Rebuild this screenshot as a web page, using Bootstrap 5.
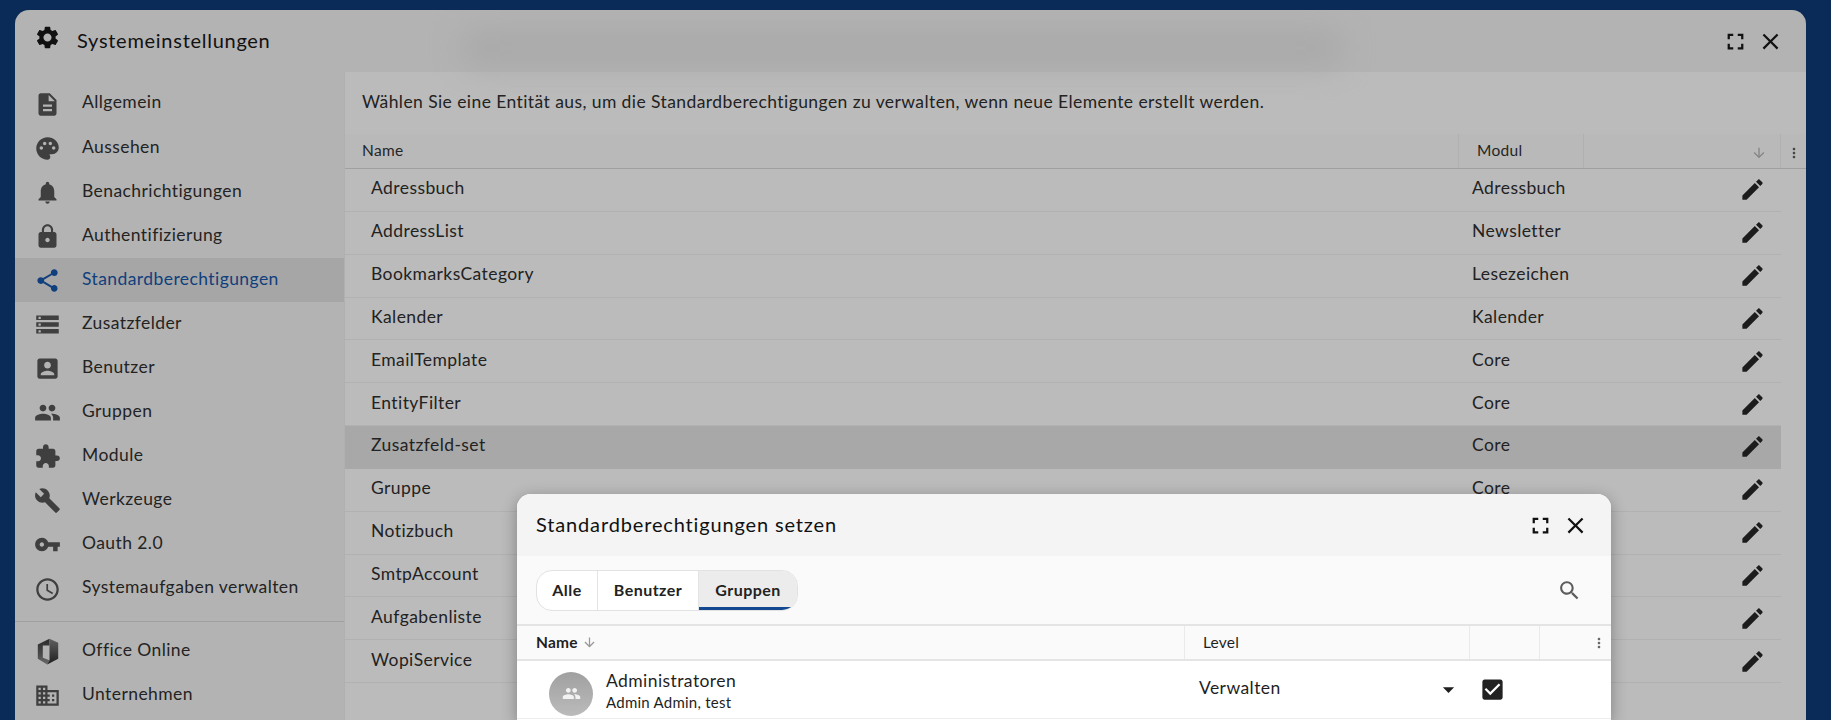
<!DOCTYPE html>
<html lang="de">
<head>
<meta charset="utf-8">
<title>Systemeinstellungen</title>
<link href="https://cdn.jsdelivr.net/npm/bootstrap@5.3.0/dist/css/bootstrap.min.css" rel="stylesheet">
<style>
html,body{height:720px;overflow:hidden}
body{background:#0a2a57;font-family:Lato,"Liberation Sans",sans-serif;color:#222;font-size:17.5px;letter-spacing:.42px}
.ico{display:block;flex:none;fill:currentColor}
.winframe{margin:10px 25px 0 15px;height:710px;background:#b3b3b3;border-radius:14px 14px 0 0;position:relative;overflow:hidden}
.wintitle{height:62px;flex:none;padding:0 22px 0 18.5px;color:#111}
.wintitle h1{font-size:20px;font-weight:400;letter-spacing:.72px;margin:0 0 0 16.5px;position:relative;top:-1px}
.smear{position:absolute;left:445px;top:18px;width:885px;height:40px;background:#aaa;filter:blur(14px);border-radius:20px}
.topbtns{margin-left:auto;gap:8px}
.sidecol{width:329px;flex:none;padding-top:10px}
.sideitem{height:44.1px;padding:0 0 3px 18.5px;color:#232323;text-decoration:none}
.sideitem .ico{color:#3f3f3f;margin:0 21.5px -3px 0}
.sideitem.sel{background:#a6a6a6;color:#103f7d}
.sideitem.sel .ico{color:#103f7d}
.sidesep{border-top:1px solid #a0a0a0;margin:10px 0 7px}
.maincol{flex:1;background:#bbb;border-left:1px solid #b0b0b0;min-width:0}
.intro{padding:17px 0 0 17px;height:62px;margin:0}
.thead-main{height:35px;border-bottom:1px solid #a0a0a0;font-size:15.5px;letter-spacing:.3px;color:#252525;background:#b9b9b9}
.thead-main>div{height:100%}
.hc1{width:1113px;padding:0 0 0 17px}
.hc2{width:125px;padding:0 0 0 18px;border-left:1px solid #b0b0b0}
.hc3{width:197px;border-left:1px solid #b0b0b0;padding:3px 0 0 0;color:#868686;justify-content:flex-end}
.hc4{width:26px;border-left:1px solid #b0b0b0;color:#444;justify-content:center;padding-top:3px}
.erow{width:1436px;height:42.85px;border-bottom:1px solid #b1b1b1}
.erow.hov{background:#a8a8a8;border-bottom-color:#a8a8a8}
.ename{width:1127px;padding:0 0 3px 26px}
.emod{width:267px;padding-bottom:3px}
.pen{color:#1c1c1c}
.dlg{position:absolute;left:517px;top:494px;width:1094px;height:226px;background:#fff;border-radius:14px 14px 0 0;box-shadow:0 4px 16px rgba(0,0,0,.32);overflow:hidden;color:#1f1f1f}
.dlghead{height:62px;background:#f4f4f4;padding:0 22.5px 0 19px;color:#111}
.dlghead h2{font-size:20px;font-weight:400;letter-spacing:.85px;margin:0;position:relative;top:-1px}
.dlgtools{height:70px;background:#fafafa;padding:0 29.5px 0 19px;border-bottom:2px solid #e4e4e4}
.segs{height:41px;border:1px solid #e2e2e2;border-radius:16px;background:#fff;overflow:hidden}
.segs>a{height:100%;font-weight:700;font-size:16px;letter-spacing:.45px;color:#222;text-decoration:none;border-right:1px solid #e4e4e4;justify-content:center}
.sega{width:61px}
.segb{width:101px}
.segc{width:98px}
.segs>a.on{background:#ececec;border-right:0;border-bottom:3px solid #12488f;padding-top:3px}
.searchbtn{margin-left:auto;color:#5c5c5c}
.dhead{height:35px;background:#fafafa;border-bottom:2px solid #e4e4e4;font-size:15.5px;letter-spacing:.2px}
.dhead>div{height:100%}
.dh1{width:667px;padding-left:19px;font-weight:700}
.dh1 .ico{color:#999;margin-left:4px}
.dh2{width:285px;padding-left:18px;border-left:1px solid #eaeaea}
.dh3{width:70px;border-left:1px solid #eaeaea}
.dh4{flex:1;border-left:1px solid #eaeaea;color:#666;justify-content:flex-end;padding-right:4px}
.drow{height:58px;border-bottom:1px solid #ededed}
.dav{width:44px;height:44px;flex:none;border-radius:50%;background:linear-gradient(#a0a0a0,#bbb);color:#f2f2f2;margin:0 13px 0 32px;position:relative;top:4px}
.dnm{width:593px;line-height:1.2;position:relative;top:1px}
.dnm b{display:block;font-weight:400}
.dnm span{display:block;font-size:15px;letter-spacing:.25px;margin-top:2px}
.dlev{width:262.5px}
.lvltxt{margin-bottom:3px}
.dchk{color:#222;margin-left:17px}
</style>
</head>
<body>
<svg width="0" height="0" class="d-block position-absolute">
<defs>
<linearGradient id="ofl" x1="0" y1="0" x2="0" y2="1"><stop offset="0" stop-color="#2a2a2a"/><stop offset=".6" stop-color="#4a4a4a"/><stop offset="1" stop-color="#6a6a6a"/></linearGradient>
<linearGradient id="ofr" x1="0" y1="0" x2="0" y2="1"><stop offset="0" stop-color="#606060"/><stop offset=".7" stop-color="#333"/><stop offset="1" stop-color="#1f1f1f"/></linearGradient>
<symbol id="settings" viewBox="0 0 24 24"><path d="M19.14 12.94c.04-.3.06-.61.06-.94 0-.32-.02-.64-.07-.94l2.03-1.58c.18-.14.23-.41.12-.61l-1.92-3.32c-.12-.22-.37-.29-.59-.22l-2.39.96c-.5-.38-1.03-.7-1.62-.94l-.36-2.54c-.04-.24-.24-.41-.48-.41h-3.84c-.24 0-.43.17-.47.41l-.36 2.54c-.59.24-1.13.57-1.62.94l-2.39-.96c-.22-.08-.47 0-.59.22L2.74 8.87c-.12.21-.08.47.12.61l2.03 1.58c-.05.3-.09.63-.09.94s.02.64.07.94l-2.03 1.58c-.18.14-.23.41-.12.61l1.92 3.32c.12.22.37.29.59.22l2.39-.96c.5.38 1.03.7 1.62.94l.36 2.54c.05.24.24.41.48.41h3.84c.24 0 .44-.17.47-.41l.36-2.54c.59-.24 1.13-.56 1.62-.94l2.39.96c.22.08.47 0 .59-.22l1.92-3.32c.12-.22.07-.47-.12-.61l-2.01-1.58zM12 15.6c-1.98 0-3.6-1.62-3.6-3.6s1.62-3.6 3.6-3.6 3.6 1.62 3.6 3.6-1.62 3.6-3.6 3.6z"/></symbol>
<symbol id="desc" viewBox="0 0 24 24"><path d="M14 2H6c-1.1 0-1.99.9-1.99 2L4 20c0 1.1.89 2 1.99 2H18c1.1 0 2-.9 2-2V8l-6-6zm2 16H8v-2h8v2zm0-4H8v-2h8v2zm-3-5V3.5L18.5 9H13z"/></symbol>
<symbol id="palette" viewBox="0 0 24 24"><path d="M12 2C6.49 2 2 6.49 2 12s4.49 10 10 10c1.38 0 2.5-1.12 2.5-2.5 0-.61-.23-1.2-.64-1.67-.08-.1-.13-.21-.13-.33 0-.28.22-.5.5-.5H16c3.31 0 6-2.69 6-6 0-4.96-4.49-9-10-9zm5.5 11c-.83 0-1.5-.67-1.5-1.5s.67-1.5 1.5-1.5 1.5.67 1.5 1.5-.67 1.5-1.5 1.5zm-3-4c-.83 0-1.5-.67-1.5-1.5S13.67 6 14.5 6s1.5.67 1.5 1.5S15.33 9 14.5 9zM5 11.5c0-.83.67-1.5 1.5-1.5s1.5.67 1.5 1.5S7.33 13 6.5 13 5 12.33 5 11.5zm6-4c0 .83-.67 1.5-1.5 1.5S8 8.33 8 7.5 8.67 6 9.5 6s1.5.67 1.5 1.5z"/></symbol>
<symbol id="bell" viewBox="0 0 24 24"><path d="M12 22c1.1 0 2-.9 2-2h-4c0 1.1.9 2 2 2zm6-6v-5c0-3.07-1.63-5.64-4.5-6.32V4c0-.83-.67-1.5-1.5-1.5s-1.5.67-1.5 1.5v.68C7.64 5.36 6 7.92 6 11v5l-2 2v1h16v-1l-2-2z"/></symbol>
<symbol id="lock" viewBox="0 0 24 24"><path d="M18 8h-1V6c0-2.76-2.24-5-5-5S7 3.24 7 6v2H6c-1.1 0-2 .9-2 2v10c0 1.1.9 2 2 2h12c1.1 0 2-.9 2-2V10c0-1.1-.9-2-2-2zm-6 9c-1.1 0-2-.9-2-2s.9-2 2-2 2 .9 2 2-.9 2-2 2zm3.1-9H8.9V6c0-1.71 1.39-3.1 3.1-3.1 1.71 0 3.1 1.39 3.1 3.1v2z"/></symbol>
<symbol id="share" viewBox="0 0 24 24"><path d="M18 16.08c-.76 0-1.44.3-1.96.77L8.91 12.7c.05-.23.09-.46.09-.7s-.04-.47-.09-.7l7.05-4.11c.54.5 1.25.81 2.04.81 1.66 0 3-1.34 3-3s-1.34-3-3-3-3 1.34-3 3c0 .24.04.47.09.7L8.04 9.81C7.5 9.31 6.79 9 6 9c-1.66 0-3 1.34-3 3s1.34 3 3 3c.79 0 1.5-.31 2.04-.81l7.12 4.16c-.05.21-.08.43-.08.65 0 1.61 1.31 2.92 2.92 2.92s2.92-1.31 2.92-2.92-1.31-2.92-2.92-2.92z"/></symbol>
<symbol id="storage" viewBox="0 0 24 24"><path d="M2 20h20v-4H2v4zm2-3h2v2H4v-2zM2 4v4h20V4H2zm4 3H4V5h2v2zm-4 7h20v-4H2v4zm2-3h2v2H4v-2z"/></symbol>
<symbol id="accbox" viewBox="0 0 24 24"><path d="M3 5v14c0 1.1.89 2 2 2h14c1.1 0 2-.9 2-2V5c0-1.1-.9-2-2-2H5c-1.11 0-2 .9-2 2zm12 4c0 1.66-1.34 3-3 3s-3-1.34-3-3 1.34-3 3-3 3 1.34 3 3zm-9 8c0-2 4-3.1 6-3.1s6 1.1 6 3.1v1H6v-1z"/></symbol>
<symbol id="group" viewBox="0 0 24 24"><path d="M16 11c1.66 0 2.99-1.34 2.99-3S17.66 5 16 5c-1.66 0-3 1.34-3 3s1.34 3 3 3zm-8 0c1.66 0 2.99-1.34 2.99-3S9.66 5 8 5C6.34 5 5 6.34 5 8s1.34 3 3 3zm0 2c-2.33 0-7 1.17-7 3.5V19h14v-2.5c0-2.33-4.67-3.5-7-3.5zm8 0c-.29 0-.62.02-.97.05 1.16.84 1.97 1.97 1.97 3.45V19h6v-2.5c0-2.33-4.67-3.5-7-3.5z"/></symbol>
<symbol id="ext" viewBox="0 0 24 24"><path d="M20.5 11H19V7c0-1.1-.9-2-2-2h-4V3.5C13 2.12 11.88 1 10.5 1S8 2.12 8 3.5V5H4c-1.1 0-1.99.9-1.99 2v3.8H3.5c1.49 0 2.7 1.21 2.7 2.7s-1.21 2.7-2.7 2.7H2V20c0 1.1.9 2 2 2h3.8v-1.5c0-1.49 1.21-2.7 2.7-2.7 1.49 0 2.7 1.21 2.7 2.7V22H17c1.1 0 2-.9 2-2v-4h1.5c1.38 0 2.5-1.12 2.5-2.5S21.88 11 20.5 11z"/></symbol>
<symbol id="build" viewBox="0 0 24 24"><path d="M22.7 19l-9.1-9.1c.9-2.3.4-5-1.5-6.9-2-2-5-2.4-7.4-1.3L9 6 6 9 1.6 4.7C.4 7.1.9 10.1 2.9 12.1c1.9 1.9 4.6 2.4 6.9 1.5l9.1 9.1c.4.4 1 .4 1.4 0l2.3-2.3c.5-.4.5-1.1.1-1.4z"/></symbol>
<symbol id="key" viewBox="0 0 24 24"><path d="M12.65 10C11.83 7.67 9.61 6 7 6c-3.31 0-6 2.69-6 6s2.69 6 6 6c2.61 0 4.83-1.67 5.65-4H17v4h4v-4h2v-4H12.65zM7 14c-1.1 0-2-.9-2-2s.9-2 2-2 2 .9 2 2-.9 2-2 2z"/></symbol>
<symbol id="clock" viewBox="0 0 24 24"><path d="M11.99 2C6.47 2 2 6.48 2 12s4.47 10 9.99 10C17.52 22 22 17.52 22 12S17.52 2 11.99 2zM12 20c-4.42 0-8-3.58-8-8s3.58-8 8-8 8 3.58 8 8-3.58 8-8 8zm.5-13H11v6l5.25 3.15.75-1.23-4.5-2.67z"/></symbol>
<symbol id="biz" viewBox="0 0 24 24"><path d="M12 7V3H2v18h20V7H12zM6 19H4v-2h2v2zm0-4H4v-2h2v2zm0-4H4V9h2v2zm0-4H4V5h2v2zm4 12H8v-2h2v2zm0-4H8v-2h2v2zm0-4H8V9h2v2zm0-4H8V5h2v2zm10 12h-8v-2h2v-2h-2v-2h2v-2h-2V9h8v10zm-2-8h-2v2h2v-2zm0 4h-2v2h2v-2z"/></symbol>
<symbol id="edit" viewBox="0 0 24 24"><path d="M3 17.25V21h3.75L17.81 9.94l-3.75-3.75L3 17.25zM20.71 7.04c.39-.39.39-1.02 0-1.41l-2.34-2.34c-.39-.39-1.02-.39-1.41 0l-1.83 1.83 3.75 3.75 1.83-1.83z"/></symbol>
<symbol id="full" viewBox="0 0 24 24"><path d="M7 14H5v5h5v-2H7v-3zm-2-4h2V7h3V5H5v5zm12 7h-3v2h5v-5h-2v3zM14 5v2h3v3h2V5h-5z"/></symbol>
<symbol id="close" viewBox="0 0 24 24"><path d="M19 6.41L17.59 5 12 10.59 6.41 5 5 6.41 10.59 12 5 17.59 6.41 19 12 13.41 17.59 19 19 17.59 13.41 12z"/></symbol>
<symbol id="down" viewBox="0 0 24 24"><path d="M20 12l-1.41-1.41L13 16.17V4h-2v12.17l-5.58-5.59L4 12l8 8 8-8z"/></symbol>
<symbol id="more" viewBox="0 0 24 24"><path d="M12 8c1.1 0 2-.9 2-2s-.9-2-2-2-2 .9-2 2 .9 2 2 2zm0 2c-1.1 0-2 .9-2 2s.9 2 2 2 2-.9 2-2-.9-2-2-2zm0 6c-1.1 0-2 .9-2 2s.9 2 2 2 2-.9 2-2-.9-2-2-2z"/></symbol>
<symbol id="search" viewBox="0 0 24 24"><path d="M15.5 14h-.79l-.28-.27C15.41 12.59 16 11.11 16 9.5 16 5.91 13.09 3 9.5 3S3 5.91 3 9.5 5.91 16 9.5 16c1.61 0 3.09-.59 4.23-1.57l.27.28v.79l5 4.99L20.49 19l-4.99-5zm-6 0C7.01 14 5 11.99 5 9.5S7.01 5 9.5 5 14 7.01 14 9.5 11.99 14 9.5 14z"/></symbol>
<symbol id="chk" viewBox="0 0 24 24"><path d="M19 3H5c-1.11 0-2 .9-2 2v14c0 1.1.89 2 2 2h14c1.11 0 2-.9 2-2V5c0-1.1-.89-2-2-2zm-9 14l-5-5 1.41-1.41L10 14.17l7.59-7.59L19 8l-9 9z"/></symbol>
<symbol id="drop" viewBox="0 0 24 24"><path d="M7 10l5 5 5-5z"/></symbol>
<symbol id="office" viewBox="0 0 27 27"><path fill-rule="evenodd" d="M3.8 6.5L15.5.8 15.5 7.5H8.8V19.8L15.5 22.2 13.2 26.5 3.8 20.8Z" fill="url(#ofl)"/><path d="M15.5.8L24.2 4.8V20.8L13.2 26.5 15.5 22.2Z" fill="url(#ofr)"/></symbol>
</defs>
</svg>

<div class="winframe d-flex flex-column">
  <div class="smear"></div>
  <header class="wintitle d-flex align-items-center">
    <svg class="ico" width="27" height="27" style="margin-top:-8px"><use href="#settings"/></svg>
    <h1>Systemeinstellungen</h1>
    <div class="topbtns d-flex align-items-center">
      <svg class="ico" width="27" height="27"><use href="#full"/></svg>
      <svg class="ico" width="27" height="27"><use href="#close"/></svg>
    </div>
  </header>
  <div class="d-flex flex-fill">
    <nav class="sidecol">
      <a class="sideitem d-flex align-items-center" href="#"><svg class="ico" width="27" height="27"><use href="#desc"/></svg>Allgemein</a>
      <a class="sideitem d-flex align-items-center" href="#"><svg class="ico" width="27" height="27"><use href="#palette"/></svg>Aussehen</a>
      <a class="sideitem d-flex align-items-center" href="#"><svg class="ico" width="27" height="27"><use href="#bell"/></svg>Benachrichtigungen</a>
      <a class="sideitem d-flex align-items-center" href="#"><svg class="ico" width="27" height="27"><use href="#lock"/></svg>Authentifizierung</a>
      <a class="sideitem sel d-flex align-items-center" href="#"><svg class="ico" width="27" height="27"><use href="#share"/></svg>Standardberechtigungen</a>
      <a class="sideitem d-flex align-items-center" href="#"><svg class="ico" width="27" height="27"><use href="#storage"/></svg>Zusatzfelder</a>
      <a class="sideitem d-flex align-items-center" href="#"><svg class="ico" width="27" height="27"><use href="#accbox"/></svg>Benutzer</a>
      <a class="sideitem d-flex align-items-center" href="#"><svg class="ico" width="27" height="27"><use href="#group"/></svg>Gruppen</a>
      <a class="sideitem d-flex align-items-center" href="#"><svg class="ico" width="27" height="27"><use href="#ext"/></svg>Module</a>
      <a class="sideitem d-flex align-items-center" href="#"><svg class="ico" width="27" height="27"><use href="#build"/></svg>Werkzeuge</a>
      <a class="sideitem d-flex align-items-center" href="#"><svg class="ico" width="27" height="27"><use href="#key"/></svg>Oauth 2.0</a>
      <a class="sideitem d-flex align-items-center" href="#"><svg class="ico" width="27" height="27"><use href="#clock"/></svg>Systemaufgaben verwalten</a>
      <div class="sidesep"></div>
      <a class="sideitem d-flex align-items-center" href="#"><svg class="ico" width="27" height="27"><use href="#office"/></svg>Office Online</a>
      <a class="sideitem d-flex align-items-center" href="#"><svg class="ico" width="27" height="27"><use href="#biz"/></svg>Unternehmen</a>
    </nav>
    <main class="maincol">
      <p class="intro">Wählen Sie eine Entität aus, um die Standardberechtigungen zu verwalten, wenn neue Elemente erstellt werden.</p>
      <div class="thead-main d-flex">
        <div class="hc1 d-flex align-items-center">Name</div>
        <div class="hc2 d-flex align-items-center">Modul</div>
        <div class="hc3 d-flex align-items-center"><svg class="ico" width="16" height="16" style="margin-right:13px"><use href="#down"/></svg></div>
        <div class="hc4 d-flex align-items-center"><svg class="ico" width="16" height="16"><use href="#more"/></svg></div>
      </div>
      <div class="erow d-flex align-items-center"><div class="ename">Adressbuch</div><div class="emod">Adressbuch</div><svg class="ico pen" width="27" height="27"><use href="#edit"/></svg></div>
      <div class="erow d-flex align-items-center"><div class="ename">AddressList</div><div class="emod">Newsletter</div><svg class="ico pen" width="27" height="27"><use href="#edit"/></svg></div>
      <div class="erow d-flex align-items-center"><div class="ename">BookmarksCategory</div><div class="emod">Lesezeichen</div><svg class="ico pen" width="27" height="27"><use href="#edit"/></svg></div>
      <div class="erow d-flex align-items-center"><div class="ename">Kalender</div><div class="emod">Kalender</div><svg class="ico pen" width="27" height="27"><use href="#edit"/></svg></div>
      <div class="erow d-flex align-items-center"><div class="ename">EmailTemplate</div><div class="emod">Core</div><svg class="ico pen" width="27" height="27"><use href="#edit"/></svg></div>
      <div class="erow d-flex align-items-center"><div class="ename">EntityFilter</div><div class="emod">Core</div><svg class="ico pen" width="27" height="27"><use href="#edit"/></svg></div>
      <div class="erow hov d-flex align-items-center"><div class="ename">Zusatzfeld-set</div><div class="emod">Core</div><svg class="ico pen" width="27" height="27"><use href="#edit"/></svg></div>
      <div class="erow d-flex align-items-center"><div class="ename">Gruppe</div><div class="emod">Core</div><svg class="ico pen" width="27" height="27"><use href="#edit"/></svg></div>
      <div class="erow d-flex align-items-center"><div class="ename">Notizbuch</div><div class="emod">Core</div><svg class="ico pen" width="27" height="27"><use href="#edit"/></svg></div>
      <div class="erow d-flex align-items-center"><div class="ename">SmtpAccount</div><div class="emod">Core</div><svg class="ico pen" width="27" height="27"><use href="#edit"/></svg></div>
      <div class="erow d-flex align-items-center"><div class="ename">Aufgabenliste</div><div class="emod">Core</div><svg class="ico pen" width="27" height="27"><use href="#edit"/></svg></div>
      <div class="erow d-flex align-items-center"><div class="ename">WopiService</div><div class="emod">Core</div><svg class="ico pen" width="27" height="27"><use href="#edit"/></svg></div>
    </main>
  </div>
</div>

<section class="dlg">
  <header class="dlghead d-flex align-items-center">
    <h2>Standardberechtigungen setzen</h2>
    <div class="topbtns d-flex align-items-center">
      <svg class="ico" width="27" height="27"><use href="#full"/></svg>
      <svg class="ico" width="27" height="27"><use href="#close"/></svg>
    </div>
  </header>
  <div class="dlgtools d-flex align-items-center">
    <div class="segs d-flex">
      <a class="sega d-flex align-items-center" href="#">Alle</a>
      <a class="segb d-flex align-items-center" href="#">Benutzer</a>
      <a class="segc on d-flex align-items-center" href="#">Gruppen</a>
    </div>
    <svg class="ico searchbtn" width="25" height="25"><use href="#search"/></svg>
  </div>
  <div class="dhead d-flex">
    <div class="dh1 d-flex align-items-center">Name<svg class="ico" width="15" height="15"><use href="#down"/></svg></div>
    <div class="dh2 d-flex align-items-center">Level</div>
    <div class="dh3"></div>
    <div class="dh4 d-flex align-items-center"><svg class="ico" width="16" height="16"><use href="#more"/></svg></div>
  </div>
  <div class="drow d-flex align-items-center">
    <div class="dav d-flex align-items-center justify-content-center"><svg class="ico" width="19" height="19"><use href="#group"/></svg></div>
    <div class="dnm"><b>Administratoren</b><span>Admin Admin, test</span></div>
    <div class="dlev d-flex align-items-center"><span class="lvltxt">Verwalten</span><svg class="ico ms-auto" width="27" height="27"><use href="#drop"/></svg></div>
    <svg class="ico dchk" width="27" height="27"><use href="#chk"/></svg>
  </div>
</section>
</body>
</html>
